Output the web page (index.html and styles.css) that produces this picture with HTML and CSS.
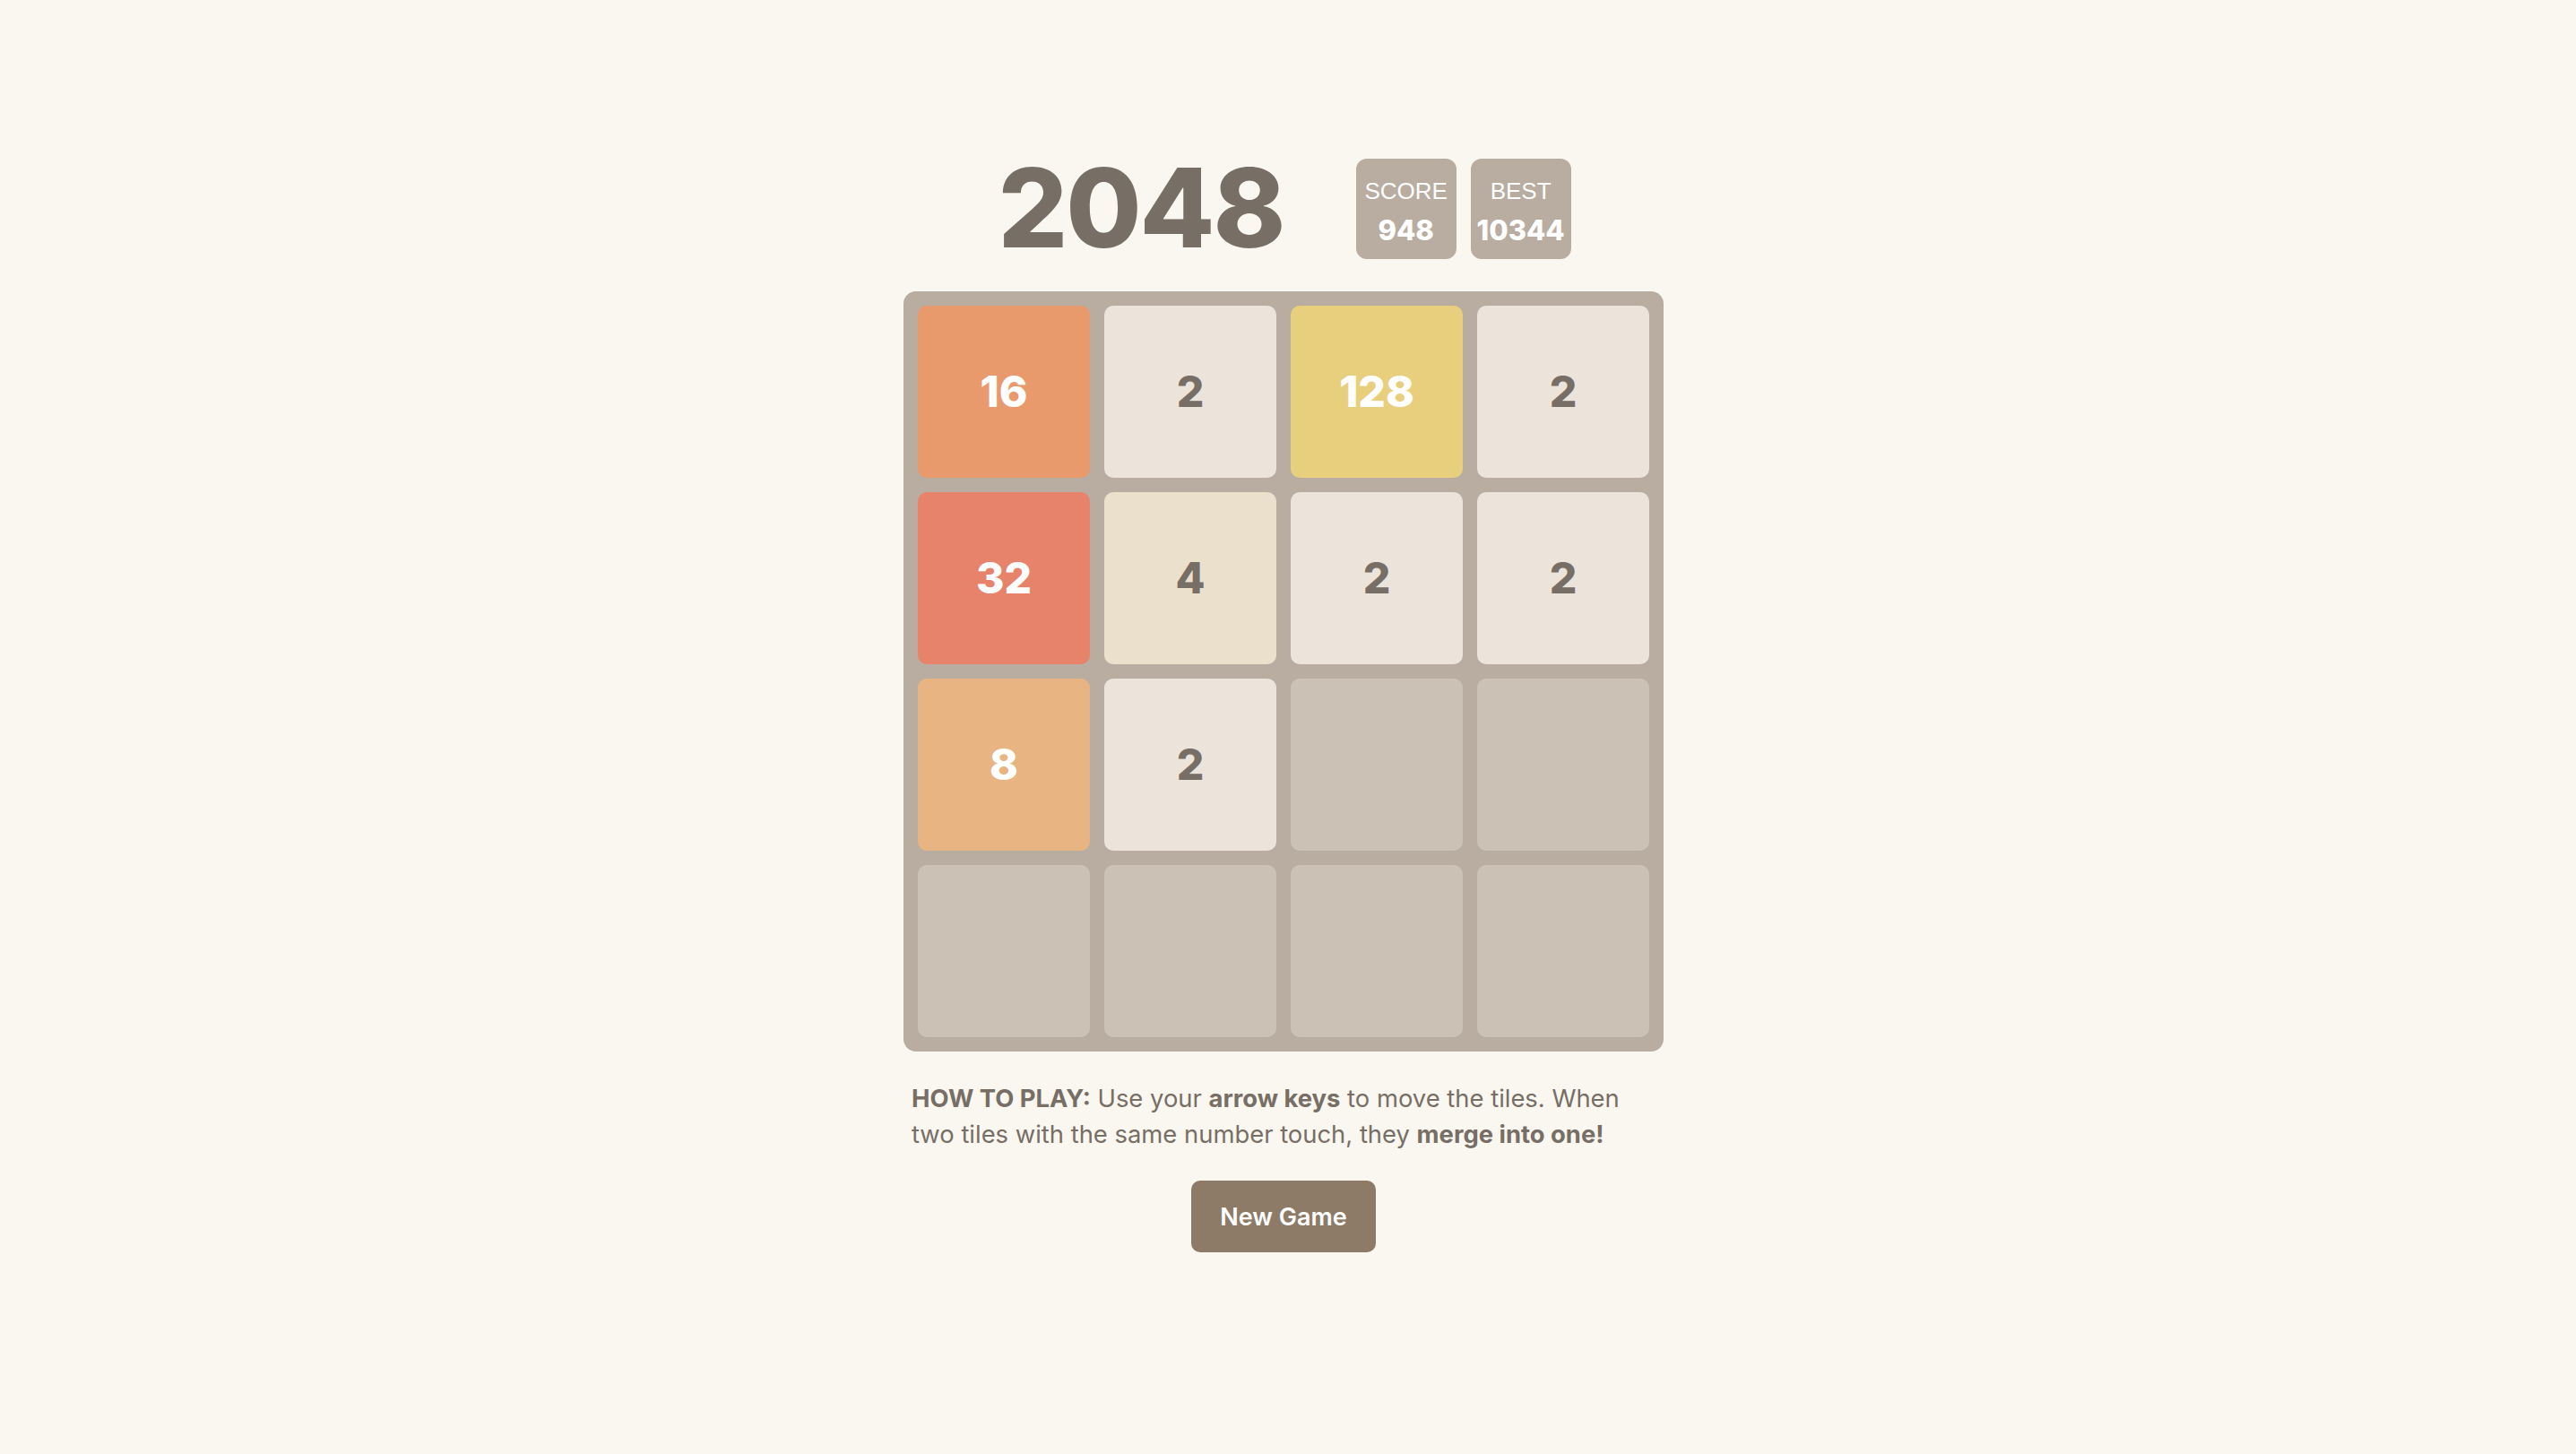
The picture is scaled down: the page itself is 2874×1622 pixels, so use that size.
FILE: index.html
```html
<!DOCTYPE html>
<html lang="en">
<head>
<meta charset="utf-8">
<title>2048</title>
<link rel="stylesheet" href="styles.css">
</head>
<body>
<main class="app">
  <header class="header">
    <h1 class="title">2048</h1>
    <div class="scores">
      <div class="score-box">
        <div class="score-label">SCORE</div>
        <div class="score-value">948</div>
      </div>
      <div class="score-box">
        <div class="score-label">BEST</div>
        <div class="score-value">10344</div>
      </div>
    </div>
  </header>

  <section class="board">
    <div class="tile t16">16</div>
    <div class="tile t2">2</div>
    <div class="tile t128">128</div>
    <div class="tile t2">2</div>

    <div class="tile t32">32</div>
    <div class="tile t4">4</div>
    <div class="tile t2">2</div>
    <div class="tile t2">2</div>

    <div class="tile t8">8</div>
    <div class="tile t2">2</div>
    <div class="tile empty"></div>
    <div class="tile empty"></div>

    <div class="tile empty"></div>
    <div class="tile empty"></div>
    <div class="tile empty"></div>
    <div class="tile empty"></div>
  </section>

  <p class="howto"><strong>HOW TO PLAY:</strong> Use your <strong>arrow keys</strong> to move the tiles. When<br>two tiles with the same number touch, they <strong>merge into one!</strong></p>

  <button class="new-game" type="button">New Game</button>
</main>
</body>
</html>
```

FILE: styles.css
```css
html, body {
  margin: 0;
  padding: 0;
  background: #faf7f0;
}

body {
  font-family: "Inter", "Liberation Sans", sans-serif;
  color: #776e66;
}

.app {
  display: flex;
  flex-direction: column;
  align-items: center;
  padding-top: 177px;
  padding-right: 10px;
}

.header {
  display: flex;
  align-items: center;
  gap: 82px;
  height: 112px;
  margin-bottom: 36px;
}

.title {
  margin: 0;
  font-family: "Inter", "Liberation Sans", sans-serif;
  font-weight: 800;
  font-size: 122px;
  line-height: 1;
  letter-spacing: -2px;
  color: #776e66;
  position: relative;
  top: -1px;
  left: 2px;
}

.scores {
  display: flex;
  gap: 16px;
}

.score-box {
  box-sizing: border-box;
  width: 112px;
  height: 112px;
  padding-top: 6px;
  border-radius: 12px;
  background: #b9ada1;
  color: #ffffff;
  display: flex;
  flex-direction: column;
  align-items: center;
  justify-content: center;
  gap: 14px;
}

.score-label {
  font-family: "Liberation Sans", "Inter", sans-serif;
  font-size: 26px;
  line-height: 28px;
}

.score-value {
  font-family: "Inter", "Liberation Sans", sans-serif;
  font-weight: 800;
  font-size: 31px;
  line-height: 32px;
}

.board {
  display: grid;
  grid-template-columns: repeat(4, 192px);
  grid-auto-rows: 192px;
  gap: 16px;
  padding: 16px;
  background: #b9ada1;
  border-radius: 14px;
}

.tile {
  border-radius: 10px;
  display: flex;
  align-items: center;
  justify-content: center;
  font-weight: 800;
  font-size: 48px;
  color: #776e66;
  padding-bottom: 2px;
  box-sizing: border-box;
}

.empty { background: #cbc1b5; }
.t2 { background: #ece4db; }
.t4 { background: #ebe0cc; }
.t8 { background: #e8b482; color: #ffffff; }
.t16 { background: #e89a6c; color: #ffffff; }
.t32 { background: #e6836a; color: #ffffff; }
.t128 { background: #e8cf7e; color: #ffffff; }

.howto {
  box-sizing: border-box;
  width: 848px;
  margin: 32px 0 32px;
  padding: 0 8px 0 9px;
  font-size: 27.4px;
  line-height: 40px;
  color: #776e66;
}

.howto strong {
  font-weight: 700;
}

.new-game {
  height: 80px;
  padding: 0 32px;
  border: none;
  border-radius: 10px;
  background: #8d7b68;
  color: #ffffff;
  font-family: "Inter", "Liberation Sans", sans-serif;
  font-weight: 600;
  font-size: 27px;
  cursor: pointer;
}
```
